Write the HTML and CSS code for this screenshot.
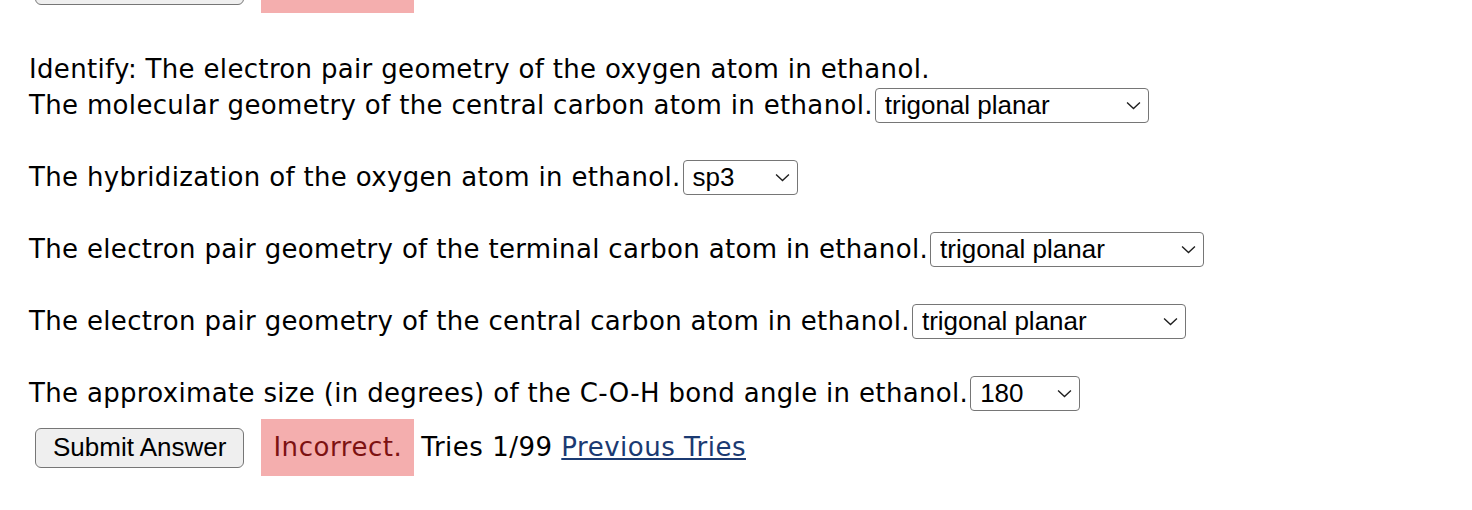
FILE: index.html
```html
<!DOCTYPE html>
<html>
<head>
    <title>Ethanol - Geometry</title>
    <link rel="stylesheet" href="styles.css">
</head>
<body>
    <div class="page">
        <!-- answer row of the previous part -->
        <div class="submit-row prev">
            <button class="submit">Submit Answer</button>
            <span class="feedback">Incorrect.</span>
        </div>

        <p class="question">
            Identify: The electron pair geometry of the oxygen atom in ethanol.<br>
            The molecular geometry of the central carbon atom in ethanol.<span class="pick wide"><select><option>trigonal planar</option><option>tetrahedral</option><option>linear</option><option>bent</option></select><svg viewBox="0 0 14 8"><path d="M1 1.2 L7 6.8 L13 1.2"/></svg></span><br>
            <br>
            The hybridization of the oxygen atom in ethanol.<span class="pick hyb"><select><option>sp3</option><option>sp2</option><option>sp</option></select><svg viewBox="0 0 14 8"><path d="M1 1.2 L7 6.8 L13 1.2"/></svg></span><br>
            <br>
            The electron pair geometry of the terminal carbon atom in ethanol.<span class="pick wide"><select><option>trigonal planar</option><option>tetrahedral</option><option>linear</option></select><svg viewBox="0 0 14 8"><path d="M1 1.2 L7 6.8 L13 1.2"/></svg></span><br>
            <br>
            The electron pair geometry of the central carbon atom in ethanol.<span class="pick wide"><select><option>trigonal planar</option><option>tetrahedral</option><option>linear</option></select><svg viewBox="0 0 14 8"><path d="M1 1.2 L7 6.8 L13 1.2"/></svg></span><br>
            <br>
            The approximate size (in degrees) of the C-O-H bond angle in ethanol.<span class="pick deg"><select><option>180</option><option>120</option><option>109.5</option></select><svg viewBox="0 0 14 8"><path d="M1 1.2 L7 6.8 L13 1.2"/></svg></span>
        </p>

        <div class="submit-row">
            <button class="submit">Submit Answer</button>
            <span class="feedback">Incorrect.</span>
            <span class="tries">Tries 1/99 <a href="#">Previous Tries</a></span>
        </div>
    </div>
</body>
</html>
```

FILE: styles.css
```css
body {
    margin: 0;
    background: #ffffff;
    color: #000000;
    font-family: "DejaVu Sans", Verdana, sans-serif;
    font-size: 26px;
}

.page {
    padding-left: 29px;
}

.question {
    margin: 38px 0 8px 0;
    line-height: 36px;
    letter-spacing: 0.33px;
}

/* select boxes with their own arrow */
.pick {
    position: relative;
    display: inline-block;
    margin-left: 2px;
    letter-spacing: 0;
}

.pick select {
    appearance: none;
    -webkit-appearance: none;
    box-sizing: border-box;
    height: 35px;
    padding: 0 30px 0 9px;
    font-family: "Liberation Sans", Arial, sans-serif;
    font-size: 26px;
    color: #000000;
    background-color: #ffffff;
    border: 1px solid #767676;
    border-radius: 4px;
    vertical-align: baseline;
}

.pick svg {
    position: absolute;
    right: 8px;
    top: 50%;
    width: 15px;
    height: 9px;
    margin-top: -4px;
    pointer-events: none;
}

.pick svg path {
    fill: none;
    stroke: #1e1e1e;
    stroke-width: 1.3;
}

.pick.wide select {
    width: 274px;
}

.pick.hyb select {
    width: 115px;
}

.pick.deg select {
    width: 110px;
}

.submit-row {
    display: flex;
    align-items: center;
}

.submit-row.prev {
    margin-top: -44px;
}

.submit {
    box-sizing: border-box;
    height: 40px;
    margin-left: 6px;
    padding: 0 17px;
    font-family: "Liberation Sans", Arial, sans-serif;
    font-size: 26px;
    color: #000000;
    background-color: #efefef;
    border: 1px solid #767676;
    border-radius: 6px;
}

.feedback {
    display: inline-block;
    margin-left: 17px;
    padding: 0 12px;
    line-height: 57px;
    letter-spacing: 0.55px;
    background-color: #f4aeae;
    color: #7d1212;
}

.tries {
    margin-left: 7px;
    line-height: 57px;
    letter-spacing: 0.5px;
}

.tries a {
    color: #1b3a72;
}
```
